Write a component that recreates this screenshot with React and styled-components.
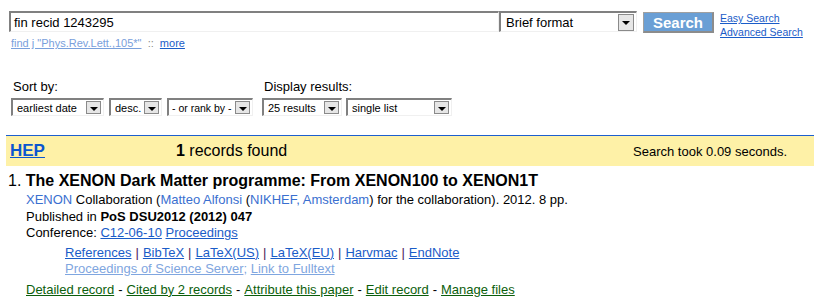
import React from "react";
import styled, { createGlobalStyle } from "styled-components";

const GlobalStyle = createGlobalStyle`
  body {
    margin: 0;
    background: #ffffff;
    font-family: "Liberation Sans", Arial, sans-serif;
    color: #000000;
  }
`;

const Page = styled.div`
  width: 814px;
  height: 305px;
  overflow: hidden;
`;

const SearchRow = styled.div`
  display: flex;
  align-items: flex-start;
  height: 22px;
  padding: 11px 0 0 9px;
`;

const InsetBox = styled.div`
  box-sizing: border-box;
  display: flex;
  align-items: center;
  background: #ffffff;
  border-style: solid;
  border-width: 2px 1px 1px 2px;
  border-color: #808080 #f0f0f0 #f0f0f0 #808080;
  width: ${(p) => p.$w}px;
  height: ${(p) => p.$h}px;
  font-size: ${(p) => p.$fs}px;
  padding-left: ${(p) => p.$pl || 3}px;
  margin-right: ${(p) => p.$mr || 0}px;
  color: #000;
  white-space: nowrap;
  flex-shrink: 0;
`;

const SelectText = styled.span`
  flex: 1;
  overflow: hidden;
  min-width: 0;
`;

const ArrowBtn = styled.span`
  box-sizing: border-box;
  display: flex;
  flex-shrink: 0;
  align-items: center;
  justify-content: center;
  width: ${(p) => p.$w}px;
  height: ${(p) => p.$h}px;
  margin-right: 2px;
  background: #e6e6e6;
  border: 1px solid #8a8a8a;
  &::after {
    content: "";
    display: block;
    margin-top: 2px;
    border-left: 4px solid transparent;
    border-right: 4px solid transparent;
    border-top: 4px solid #000;
  }
`;

const SearchButton = styled.div`
  box-sizing: border-box;
  display: flex;
  align-items: center;
  justify-content: center;
  margin: 1px 6px 0 6px;
  width: 71px;
  height: 21px;
  background: #6a9fd5;
  border-style: solid;
  border-width: 1px 2px 2px 1px;
  border-color: #a0a0a0 #8c8c8c #8c8c8c #a0a0a0;
  color: #ffffff;
  font-weight: bold;
  font-size: 15px;
`;

const SideLinks = styled.div`
  display: flex;
  flex-direction: column;
  gap: 1px;
  padding-top: 1px;
`;

const SmallLink = styled.a`
  font-size: 10.5px;
  line-height: 13px;
  color: #1a5cc8;
  text-decoration: underline;
`;

const HintRow = styled.div`
  padding: 4px 0 0 11px;
  font-size: 11px;
  line-height: 13px;
  color: #8a8a8a;
`;

const HintLink = styled.a`
  color: ${(p) => (p.$light ? "#79a0dc" : "#1a5cc8")};
  text-decoration: underline;
`;

const OptionsRow = styled.div`
  display: flex;
  padding: 29px 0 0 11px;
`;

const OptionGroup = styled.div`
  display: flex;
  flex-direction: column;
  margin-right: ${(p) => p.$mr || 0}px;
`;

const OptionLabel = styled.div`
  font-size: 13px;
  line-height: 15px;
  padding-left: 2px;
  margin-bottom: 4px;
`;

const OptionSelects = styled.div`
  display: flex;
`;

const ResultsBar = styled.div`
  margin: 19px 0 0 6px;
  height: 31px;
  box-sizing: border-box;
  border-top: 1px solid #1d5fcf;
  background: #fef1a7;
  display: flex;
  align-items: center;
  padding: 0 27px 0 4px;
`;

const CollectionLink = styled.a`
  font-size: 17px;
  font-weight: bold;
  color: #0a56d0;
  text-decoration: underline;
  width: 166px;
`;

const FoundText = styled.div`
  font-size: 16px;
  flex: 1;
  b {
    font-weight: bold;
  }
`;

const TookText = styled.div`
  font-size: 13px;
`;

const Record = styled.div`
  padding: 5px 0 0 8px;
`;

const Title = styled.div`
  font-size: 16px;
  line-height: 19px;
  b {
    font-weight: bold;
  }
`;

const Details = styled.div`
  padding: 2px 0 0 18px;
  font-size: 13px;
  line-height: 16.5px;
`;

const TextLink = styled.a`
  color: ${(p) => p.$color || "#1a5cc8"};
  text-decoration: ${(p) => (p.$plain ? "none" : "underline")};
`;

const LinkBlock = styled.div`
  padding: 3px 0 0 39px;
  font-size: 13px;
  line-height: 16px;
`;

const Pipe = styled.span`
  color: #4a1d5a;
  margin: 0 4px;
`;

const Actions = styled.div`
  padding-top: 5px;
  font-size: 13px;
  line-height: 16px;
  color: #000;
`;

const Sep = styled.span`
  margin: 0 4px;
`;

const Select = ({ w, h, fs, label, aw, ah, mr, pl }) => (
  <InsetBox $w={w} $h={h} $fs={fs} $mr={mr} $pl={pl}>
    <SelectText>{label}</SelectText>
    <ArrowBtn $w={aw} $h={ah} />
  </InsetBox>
);

const green = "#0b5e0b";

export default function App() {
  return (
    <Page>
      <GlobalStyle />
      <SearchRow>
        <InsetBox $w={490} $h={21} $fs={13}>
          fin recid 1243295
        </InsetBox>
        <Select w={138} h={21} fs={13} label="Brief format" aw={16} ah={17} pl={5} />
        <SearchButton>Search</SearchButton>
        <SideLinks>
          <SmallLink>Easy Search</SmallLink>
          <SmallLink>Advanced Search</SmallLink>
        </SideLinks>
      </SearchRow>
      <HintRow>
        <HintLink $light>find j "Phys.Rev.Lett.,105*"</HintLink>
        &nbsp; :: &nbsp;<HintLink>more</HintLink>
      </HintRow>
      <OptionsRow>
        <OptionGroup $mr={9}>
          <OptionLabel>Sort by:</OptionLabel>
          <OptionSelects>
            <Select w={93} h={18} fs={11} label="earliest date" aw={15} ah={13} mr={5} pl={4} />
            <Select w={53} h={18} fs={11} label="desc." aw={15} ah={13} mr={5} pl={4} />
            <Select w={86} h={18} fs={10.5} label="- or rank by -" aw={15} ah={13} pl={3} />
          </OptionSelects>
        </OptionGroup>
        <OptionGroup>
          <OptionLabel>Display results:</OptionLabel>
          <OptionSelects>
            <Select w={80} h={18} fs={11} label="25 results" aw={15} ah={13} mr={4} pl={4} />
            <Select w={106} h={18} fs={11} label="single list" aw={15} ah={13} pl={4} />
          </OptionSelects>
        </OptionGroup>
      </OptionsRow>
      <ResultsBar>
        <CollectionLink>HEP</CollectionLink>
        <FoundText>
          <b>1</b> records found
        </FoundText>
        <TookText>Search took 0.09 seconds.</TookText>
      </ResultsBar>
      <Record>
        <Title>
          1. <b>The XENON Dark Matter programme: From XENON100 to XENON1T</b>
        </Title>
        <Details>
          <div>
            <TextLink $plain $color="#3a6fd0">XENON</TextLink> Collaboration (
            <TextLink $plain $color="#3a6fd0">Matteo Alfonsi</TextLink> (
            <TextLink $plain $color="#3a6fd0">NIKHEF, Amsterdam</TextLink>) for the
            collaboration). 2012. 8 pp.
          </div>
          <div>
            Published in <b>PoS DSU2012 (2012) 047</b>
          </div>
          <div>
            Conference: <TextLink>C12-06-10</TextLink> <TextLink>Proceedings</TextLink>
          </div>
          <LinkBlock>
            <div>
              <TextLink>References</TextLink>
              <Pipe>|</Pipe>
              <TextLink>BibTeX</TextLink>
              <Pipe>|</Pipe>
              <TextLink>LaTeX(US)</TextLink>
              <Pipe>|</Pipe>
              <TextLink>LaTeX(EU)</TextLink>
              <Pipe>|</Pipe>
              <TextLink>Harvmac</TextLink>
              <Pipe>|</Pipe>
              <TextLink>EndNote</TextLink>
            </div>
            <div>
              <TextLink $color="#7fa6e0">Proceedings of Science Server</TextLink>
              <span style={{ color: "#7fa6e0" }}>; </span>
              <TextLink $color="#7fa6e0">Link to Fulltext</TextLink>
            </div>
          </LinkBlock>
          <Actions>
            <TextLink $color={green}>Detailed record</TextLink>
            <Sep>-</Sep>
            <TextLink $color={green}>Cited by 2 records</TextLink>
            <Sep>-</Sep>
            <TextLink $color={green}>Attribute this paper</TextLink>
            <Sep>-</Sep>
            <TextLink $color={green}>Edit record</TextLink>
            <Sep>-</Sep>
            <TextLink $color={green}>Manage files</TextLink>
          </Actions>
        </Details>
      </Record>
    </Page>
  );
}
